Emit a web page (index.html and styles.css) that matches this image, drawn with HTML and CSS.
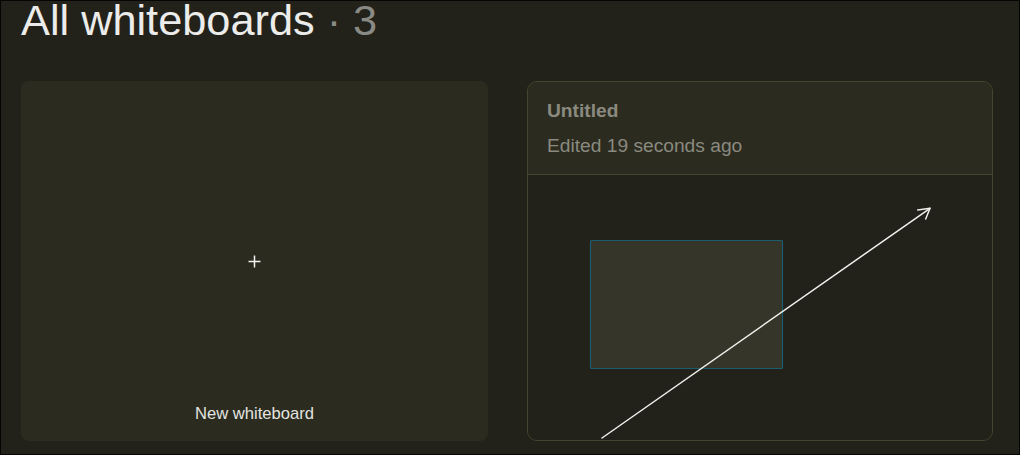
FILE: index.html
```html
<!DOCTYPE html>
<html lang="en">
<head>
<meta charset="utf-8">
<title>All whiteboards</title>
<link rel="stylesheet" href="styles.css">
</head>
<body>
<div class="page">
  <h1 class="title">All whiteboards<span class="count"> · 3</span></h1>
  <div class="grid">
    <div class="card card-new">
      <div class="plus-row">
        <svg class="plus" width="13" height="13" viewBox="0 0 13 13"><path d="M6.5 0.5V12.5M0.5 6.5H12.5" stroke="#f2f2ee" stroke-width="1.5" fill="none"/></svg>
      </div>
      <div class="new-label">New whiteboard</div>
    </div>
    <div class="card card-board">
      <div class="board-head">
        <div class="board-name">Untitled</div>
        <div class="board-meta">Edited 19 seconds ago</div>
      </div>
      <div class="board-preview">
        <svg class="preview-svg" width="464" height="265" viewBox="0 0 464 265">
          <rect x="62.5" y="65.5" width="192" height="128" rx="1" fill="#35352a" stroke="#1b5c6e" stroke-width="1.2"/>
          <path d="M74 263 L402 33.3" stroke="#f0f0ec" stroke-width="1.5" fill="none" stroke-linecap="round"/>
          <path d="M389.7 35 L402 33.3 L397.7 44" stroke="#f0f0ec" stroke-width="1.5" fill="none" stroke-linecap="round" stroke-linejoin="round"/>
        </svg>
      </div>
    </div>
  </div>
</div>
</body>
</html>
```

FILE: styles.css
```css
html, body {
  margin: 0;
  padding: 0;
  background: #22221a;
}
.page {
  box-sizing: border-box;
  width: 1020px;
  height: 455px;
  border: 1px solid #050503;
  padding: 0 27px 0 20px;
  overflow: hidden;
  font-family: "Liberation Sans", Arial, sans-serif;
}
.title {
  margin: 0;
  font-size: 43.3px;
  line-height: 38px;
  font-weight: 400;
  color: #ececea;
}
.count {
  color: #8a8a84;
}
.grid {
  margin-top: 42px;
  display: grid;
  grid-template-columns: 467px 466px;
  column-gap: 39px;
}
.card {
  box-sizing: border-box;
  height: 360px;
}
.card-new {
  background: #2b2b1f;
  border-radius: 8px;
  display: grid;
  grid-template-rows: 1fr auto 1fr;
  justify-items: center;
}
.plus-row {
  grid-row: 2;
  display: flex;
  justify-content: center;
}
.plus {
  display: block;
  margin-right: 1px;
}
.new-label {
  grid-row: 3;
  align-self: end;
  padding-bottom: 18px;
  font-size: 16.6px;
  line-height: 19px;
  color: #e4e4e0;
}
.card-board {
  border: 1px solid #46462e;
  border-radius: 10px;
  overflow: hidden;
  display: flex;
  flex-direction: column;
}
.board-head {
  background: #2b2b1f;
  padding: 18px 19px 17px;
  border-bottom: 1px solid #46462e;
}
.board-name {
  font-size: 19.2px;
  line-height: 22px;
  font-weight: 700;
  color: #8a8a80;
}
.board-meta {
  margin-top: 13px;
  font-size: 19.2px;
  line-height: 22px;
  color: #8a8a80;
}
.board-preview {
  flex: 1;
  background: #22221a;
  overflow: hidden;
}
.preview-svg {
  display: block;
}
```
